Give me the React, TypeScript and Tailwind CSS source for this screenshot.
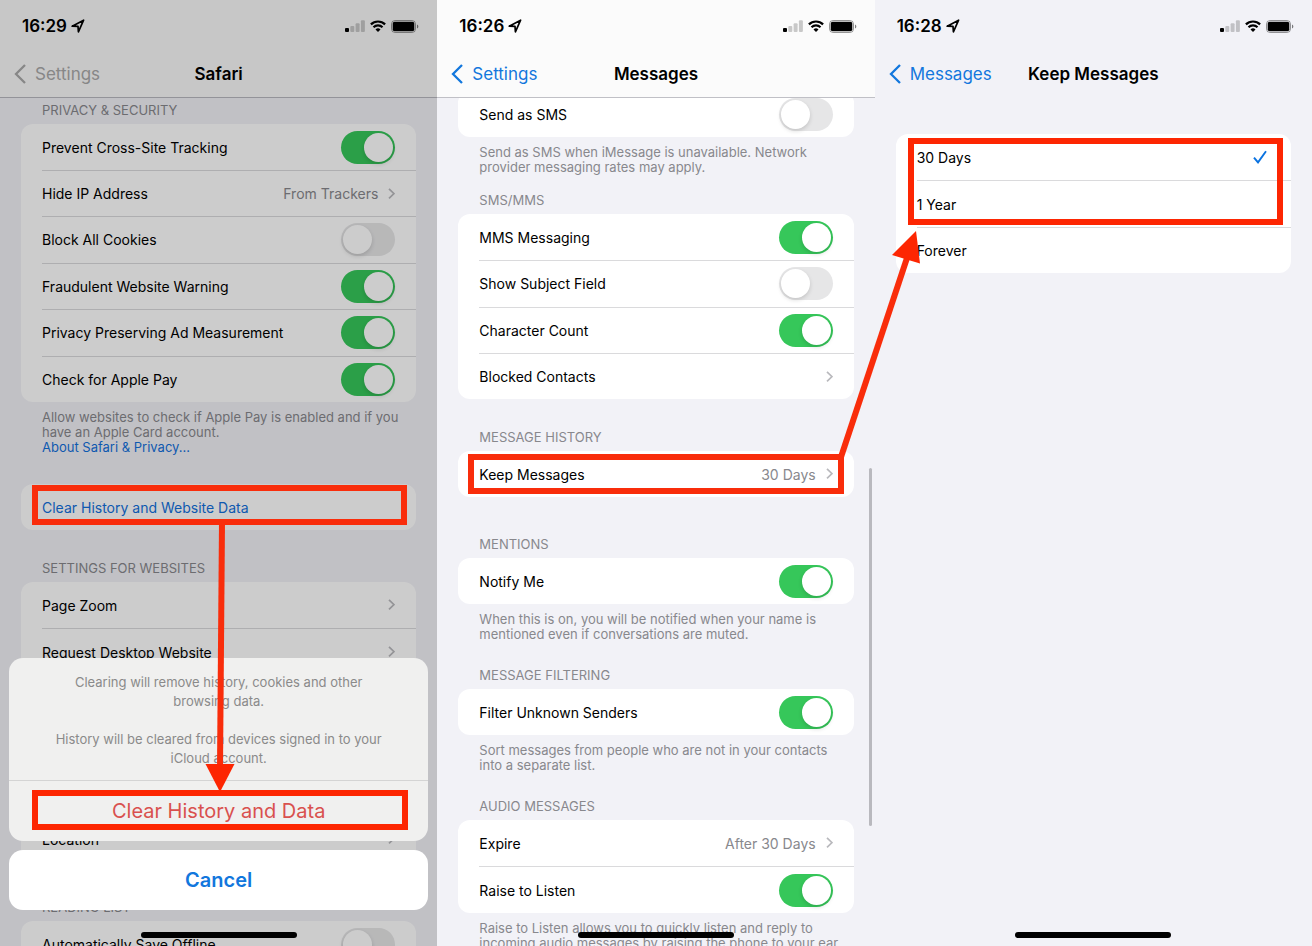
import type { ReactNode } from 'react'

type RowProps = {
  label: string
  first?: boolean
}

function SignalIcon() {
  return (
    <svg className="h-3 w-5" viewBox="0 0 20 12">
      <rect x="0" y="8" width="4" height="4" rx="1" fill="#000" />
      <rect x="5.3" y="6" width="4" height="6" rx="1" fill="#000" opacity="0.2" />
      <rect x="10.6" y="3.2" width="4" height="8.8" rx="1" fill="#000" opacity="0.2" />
      <rect x="15.9" y="0.2" width="4" height="11.8" rx="1" fill="#000" opacity="0.2" />
    </svg>
  )
}

function WifiIcon() {
  return (
    <svg className="h-3 w-4" viewBox="0 0 16 12">
      <g fill="none" stroke="#000" strokeWidth="2.2">
        <path d="M0.9 4.4a10.1 10.1 0 0 1 14.2 0" />
        <path d="M3.5 7.2a6.4 6.4 0 0 1 9 0" />
      </g>
      <path d="M8 12L5.5 9.4a3.6 3.6 0 0 1 5 0z" />
    </svg>
  )
}

function BatteryIcon() {
  return (
    <svg className="h-[13px] w-7" viewBox="0 0 28 13">
      <rect x="0.5" y="0.5" width="24" height="12" rx="3.6" fill="none" stroke="#000" strokeOpacity="0.4" />
      <rect x="1.7" y="1.7" width="21.6" height="9.6" rx="2" />
      <path d="M26 4.4v4.2a2.3 2.3 0 0 0 0-4.2z" opacity="0.5" />
    </svg>
  )
}

function LocationIcon() {
  return (
    <svg className="h-[14px] w-[14px]" viewBox="0 0 14 14">
      <path d="M1.2 7.2L12.6 1.2 7.4 12.8 7 7.4z" fill="none" stroke="#000" strokeWidth="1.7" strokeLinejoin="round" />
    </svg>
  )
}

function Chevron() {
  return (
    <svg className="h-3 w-[7px] text-[#b9b9bd]" viewBox="0 0 7 12">
      <path d="M1 0.8l5 4.8-5 4.800" fill="none" stroke="currentColor" strokeWidth="1.7" />
    </svg>
  )
}

function StatusHeader({ time, back, title, backClass, headerClass }: {
  time: string
  back: string
  title: string
  backClass: string
  headerClass: string
}) {
  return (
    <header className={`relative z-10 shrink-0 border-b ${headerClass}`}>
      {/* Status bar */}
      <div className="flex h-[52px] items-center justify-between pl-[22px] pr-[18px]">
        <div className="flex items-center gap-1 text-[17px] leading-[22px] font-semibold">
          <span>{time}</span>
          <LocationIcon />
        </div>
        <div className="flex items-center gap-[5px]">
          <SignalIcon />
          <WifiIcon />
          <BatteryIcon />
        </div>
      </div>
      {/* Navigation */}
      <div className="relative flex h-[45px] items-center justify-center pb-px">
        <a className={`absolute left-[14px] flex items-center gap-[9px] text-[17px] leading-[22px] ${backClass}`} href="#0">
          <svg className="h-5 w-3" viewBox="0 0 12 20">
            <path d="M11 1L2 10l9 9" fill="none" stroke="currentColor" strokeWidth="2.3" />
          </svg>
          {back}
        </a>
        <h1 className="text-[17px] leading-[22px] font-semibold">{title}</h1>
      </div>
    </header>
  )
}

function Label({ children }: { children: ReactNode }) {
  return <h2 className="px-[21px] pb-[6px] text-[13px] leading-[15px] text-[#88888d] uppercase">{children}</h2>
}

function Note({ children }: { children: ReactNode }) {
  return <p className="mt-2 pl-[21px] text-[13px] leading-[15px] text-[#88888d]">{children}</p>
}

function Card({ children, className = 'min-h-[46px]' }: { children: ReactNode; className?: string }) {
  return <div className={`relative flex flex-col rounded-xl bg-white pl-[21px] ${className}`}>{children}</div>
}

function ToggleRow({ label, on, first }: RowProps & { on?: boolean }) {
  return (
    <label className={`flex min-h-[46px] flex-1 items-center justify-between pr-[21px] text-sm ${first ? '' : 'border-t border-[#dadadc]'}`}>
      <span className="pt-px">{label}</span>
      <input
        type="checkbox"
        role="switch"
        defaultChecked={on}
        className="relative h-[33px] w-[54px] shrink-0 appearance-none rounded-full bg-[#e6e6e7] before:absolute before:top-[2px] before:left-[2px] before:h-[29px] before:w-[29px] before:rounded-full before:bg-white before:shadow-[0_2px_4px_rgba(0,0,0,0.15)] checked:bg-[#36c75a] checked:before:left-[23px]"
      />
    </label>
  )
}

function LinkRow({ label, value, first }: RowProps & { value?: string }) {
  return (
    <a className={`flex min-h-[46px] flex-1 items-center justify-between pr-[21px] text-sm ${first ? '' : 'border-t border-[#dadadc]'}`} href="#0">
      <span className="pt-px">{label}</span>
      <span className="flex items-center gap-[10px] text-[#88888d]">
        <span className="pt-px">{value}</span>
        <Chevron />
      </span>
    </a>
  )
}

function ChoiceRow({ label, checked, first }: RowProps & { checked?: boolean }) {
  return (
    <label className={`flex min-h-[46px] flex-1 items-center justify-between pr-6 text-sm ${first ? '' : 'border-t border-[#dadadc]'}`}>
      <input className="peer sr-only" type="radio" name="keep" defaultChecked={checked} />
      <span className="pt-0.5">{label}</span>
      <svg className="invisible h-[14px] w-[14px] text-[#0a72e0] peer-checked:visible" viewBox="0 0 14 14">
        <path d="M1 7.6L5 12.4 13 1.2" fill="none" stroke="currentColor" strokeWidth="1.9" />
      </svg>
    </label>
  )
}

function HomeBar() {
  return <div className="absolute bottom-2 left-1/2 z-30 h-[6px] w-[156px] -translate-x-1/2 rounded-full bg-black" />
}

function SafariScreen() {
  return (
    <section className="relative flex flex-col overflow-hidden bg-[#f2f2f7]">
      <StatusHeader time="16:29" back="Settings" title="Safari" backClass="text-[#a9a9a9]" headerClass="bg-[#f9f9f9] border-[#b8b8c0]" />
      <main className="px-[21px] pt-[5px]">
        <Label>Privacy &amp; Security</Label>
        <Card className="min-h-[278px]">
          <ToggleRow label="Prevent Cross-Site Tracking" on first />
          <LinkRow label="Hide IP Address" value="From Trackers" />
          <ToggleRow label="Block All Cookies" />
          <ToggleRow label="Fraudulent Website Warning" on />
          <ToggleRow label="Privacy Preserving Ad Measurement" on />
          <ToggleRow label="Check for Apple Pay" on />
        </Card>
        <Note>
          Allow websites to check if Apple Pay is enabled and if you
          <br />
          have an Apple Card account.
          <br />
          <a className="text-[#1270dc]" href="#0">About Safari &amp; Privacy...</a>
        </Note>
        <div className="mt-[29px]">
          <Card>
            <button className="flex min-h-[46px] items-center text-sm text-[#1270dc]">
              <span className="pt-px">Clear History and Website Data</span>
            </button>
            <div className="pointer-events-none absolute top-[1px] right-[9px] bottom-[5px] left-[11px] z-30 border-[6px] border-[#f92d0b]" />
          </Card>
        </div>
        <div className="mt-[31px]">
          <Label>Settings for Websites</Label>
          <Card className="min-h-[280px]">
            <LinkRow label="Page Zoom" first />
            <LinkRow label="Request Desktop Website" />
            <div className="h-[140px] border-t border-[#dadadc]" />
            <LinkRow label="Location" />
          </Card>
        </div>
        <div className="mt-[38px]">
          <Label>Reading List</Label>
          <Card>
            <ToggleRow label="Automatically Save Offline" first />
          </Card>
        </div>
      </main>
      {/* Dimmed backdrop */}
      <div className="absolute inset-0 z-20 bg-black/20" />
      {/* Action sheet */}
      <div className="absolute inset-x-[9px] bottom-9 z-20 flex flex-col gap-[9px]">
        <div className="rounded-[14px] bg-[#f0f0ef]">
          <div className="border-b border-[#d4d4d4] pt-[15px] pb-3 text-center text-[13px] leading-[19px] text-[#8a8a8a]">
            <p>
              Clearing will remove history, cookies and other
              <br />
              browsing data.
            </p>
            <p className="mt-[19px]">
              History will be cleared from devices signed in to your
              <br />
              iCloud account.
            </p>
          </div>
          <div className="relative">
            <button className="h-[60px] w-full text-xl text-[#d9504e]">Clear History and Data</button>
            <div className="pointer-events-none absolute top-[9px] right-5 bottom-[11px] left-[23px] border-[6px] border-[#fd2602]" />
          </div>
        </div>
        <button className="h-[60px] rounded-[14px] bg-white text-xl font-semibold text-[#1277dd]">Cancel</button>
      </div>
      <HomeBar />
    </section>
  )
}

function MessagesScreen() {
  return (
    <section className="relative flex flex-col overflow-hidden bg-[#f2f2f7]">
      <StatusHeader time="16:26" back="Settings" title="Messages" backClass="text-[#1277dd]" headerClass="bg-[#fbfbfb] border-[#c0c0c6]" />
      <main className="-mt-[7px] px-[21px]">
        <Card>
          <ToggleRow label="Send as SMS" first />
        </Card>
        <Note>
          Send as SMS when iMessage is unavailable. Network
          <br />
          provider messaging rates may apply.
        </Note>
        <div className="mt-[18px]">
          <Label>SMS/MMS</Label>
          <Card className="min-h-[185px]">
            <ToggleRow label="MMS Messaging" on first />
            <ToggleRow label="Show Subject Field" />
            <ToggleRow label="Character Count" on />
            <LinkRow label="Blocked Contacts" />
          </Card>
        </div>
        <div className="mt-[31px]">
          <Label>Message History</Label>
          <Card>
            <LinkRow label="Keep Messages" value="30 Days" first />
            <div className="pointer-events-none absolute top-[3px] right-[10px] bottom-[3px] left-[10px] border-[6px] border-[#f92d0b]" />
          </Card>
        </div>
        <div className="mt-10">
          <Label>Mentions</Label>
          <Card>
            <ToggleRow label="Notify Me" on first />
          </Card>
          <Note>
            When this is on, you will be notified when your name is
            <br />
            mentioned even if conversations are muted.
          </Note>
        </div>
        <div className="mt-[26px]">
          <Label>Message Filtering</Label>
          <Card>
            <ToggleRow label="Filter Unknown Senders" on first />
          </Card>
          <Note>
            Sort messages from people who are not in your contacts
            <br />
            into a separate list.
          </Note>
        </div>
        <div className="mt-[26px]">
          <Label>Audio Messages</Label>
          <Card className="min-h-[93px]">
            <LinkRow label="Expire" value="After 30 Days" first />
            <ToggleRow label="Raise to Listen" on />
          </Card>
          <Note>
            Raise to Listen allows you to quickly listen and reply to
            <br />
            incoming audio messages by raising the phone to your ear.
          </Note>
        </div>
      </main>
      {/* Scroll indicator */}
      <div className="absolute right-[3px] bottom-[120px] h-[358px] w-[3px] rounded-full bg-[#b9b9be]" />
      <HomeBar />
    </section>
  )
}

function KeepMessagesScreen() {
  return (
    <section className="relative flex flex-col overflow-hidden bg-[#f2f2f7]">
      <StatusHeader time="16:28" back="Messages" title="Keep Messages" backClass="text-[#1277dd]" headerClass="border-transparent" />
      <main className="px-[21px] pt-9">
        <Card className="min-h-[139px]">
          <ChoiceRow label="30 Days" checked first />
          <ChoiceRow label="1 Year" />
          <ChoiceRow label="Forever" />
          <div className="pointer-events-none absolute top-1 right-2 bottom-12 left-3 border-[6px] border-[#fd2602]" />
        </Card>
      </main>
      <HomeBar />
    </section>
  )
}

export default function App() {
  return (
    <div className="relative grid h-screen grid-cols-3 overflow-hidden font-['Inter',sans-serif] text-black">
      <SafariScreen />
      <MessagesScreen />
      <KeepMessagesScreen />
      {/* Arrows between the highlighted rows */}
      <svg className="pointer-events-none absolute inset-0 z-40 h-full w-full" viewBox="0 0 1312 946">
        <g stroke="#f92d0b" strokeWidth="6">
          <path d="M222 522L220 768" />
          <path d="M841 457L907 258" />
        </g>
        <g fill="#fd2602">
          <path d="M205.5 764h29L220 792z" />
          <path d="M916 231l-24 24 28 8.500z" />
        </g>
      </svg>
    </div>
  )
}
